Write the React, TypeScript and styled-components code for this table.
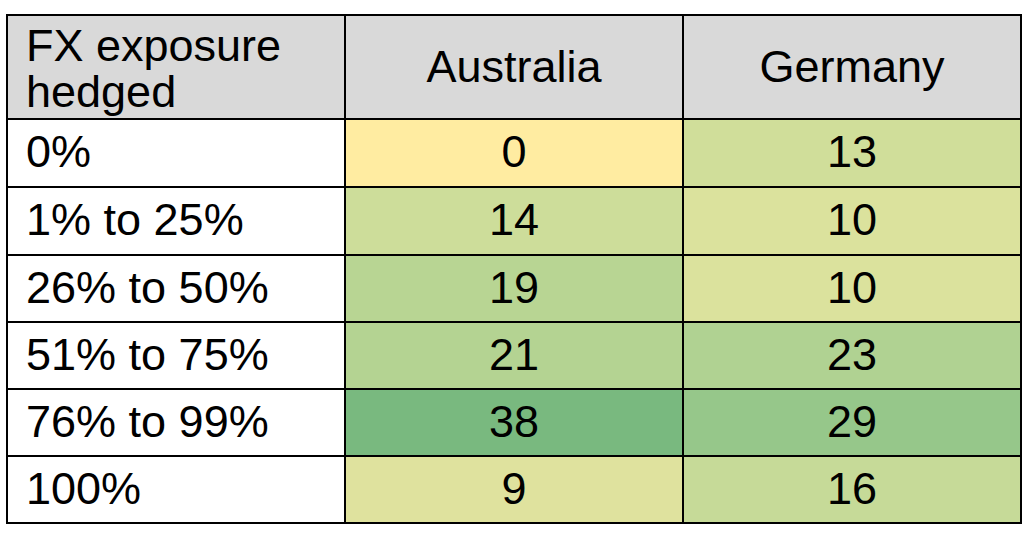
import styled, { createGlobalStyle } from "styled-components"

type RowType = {
    label: string
    australia: { value: number; bg: string }
    germany: { value: number; bg: string }
}

const rows: RowType[] = [
    { label: "0%", australia: { value: 0, bg: "#ffeca1" }, germany: { value: 13, bg: "#d0de9a" } },
    { label: "1% to 25%", australia: { value: 14, bg: "#cddd9a" }, germany: { value: 10, bg: "#dbe29d" } },
    { label: "26% to 50%", australia: { value: 19, bg: "#b8d593" }, germany: { value: 10, bg: "#dbe29d" } },
    { label: "51% to 75%", australia: { value: 21, bg: "#b4d392" }, germany: { value: 23, bg: "#b0d292" } },
    { label: "76% to 99%", australia: { value: 38, bg: "#79b97f" }, germany: { value: 29, bg: "#96c78a" } },
    { label: "100%", australia: { value: 9, bg: "#dfe29e" }, germany: { value: 16, bg: "#c6da98" } },
]

const GlobalStyle = createGlobalStyle`
body {
    margin: 0;
    background: #ffffff;
    font-family: "Liberation Sans", Arial, sans-serif;
}
`

export default function App() {
    return (
        <>
            <GlobalStyle />
            <Page>
                <Table>
                    <HeadCell align="left">
                        <HeadText>FX exposure<br />hedged</HeadText>
                    </HeadCell>
                    <HeadCell align="center">Australia</HeadCell>
                    <HeadCell align="center">Germany</HeadCell>

                    {rows.map((row) => (
                        <Row key={row.label}>
                            <LabelCell>{row.label}</LabelCell>
                            <ValueCell $bg={row.australia.bg}>{row.australia.value}</ValueCell>
                            <ValueCell $bg={row.germany.bg}>{row.germany.value}</ValueCell>
                        </Row>
                    ))}
                </Table>
            </Page>
        </>
    )
}

const Page = styled.div`
padding: 14px 0 0 6px;
`

const Table = styled.div`
display: grid;
grid-template-columns: repeat(3, 336px);
grid-template-rows: 102px 66px 66px 65px 65px 65px 65px;
gap: 2px;
padding: 2px;
width: fit-content;
background: #000000;
color: #000000;
font-size: 45px;
`

const Row = styled.div`
display: contents;
`

const Cell = styled.div`
display: flex;
align-items: center;
padding-bottom: 2px;
`

const HeadCell = styled(Cell)<{ align: "left" | "center" }>`
background: #d9d9d9;
justify-content: ${(p) => (p.align === "center" ? "center" : "flex-start")};
padding: 0 18px;
`

const HeadText = styled.div`
line-height: 46px;
padding-top: 3px;
`

const LabelCell = styled(Cell)`
background: #ffffff;
padding-left: 18px;
`

const ValueCell = styled(Cell)<{ $bg: string }>`
background: ${(p) => p.$bg};
justify-content: center;
`
